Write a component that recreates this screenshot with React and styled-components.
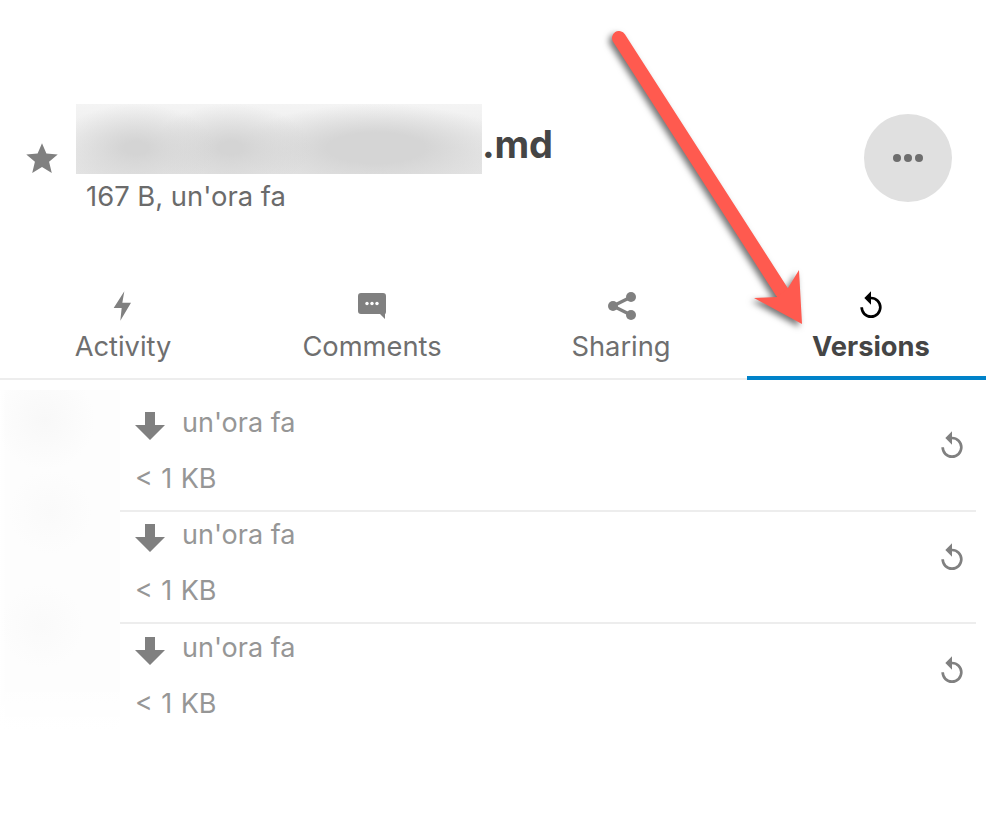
import React from "react";
import styled, { createGlobalStyle } from "styled-components";

const GlobalStyle = createGlobalStyle`
  html, body {
    margin: 0;
    padding: 0;
    background: #fff;
  }
  body {
    font-family: Inter, "Liberation Sans", sans-serif;
  }
`;

const Page = styled.div`
  position: relative;
  width: 986px;
  height: 814px;
  overflow: hidden;
  background: #fff;
`;

const Header = styled.header`
  display: flex;
  align-items: flex-start;
  height: 290px;
  padding: 104px 34px 0 25px;
  box-sizing: border-box;
`;

const StarIcon = styled.svg`
  width: 34px;
  height: 34px;
  margin-top: 37px;
  margin-right: 17px;
  fill: #808080;
  flex: none;
`;

const TitleBlock = styled.div`
  display: flex;
  flex-direction: column;
`;

const TitleRow = styled.div`
  display: flex;
  align-items: center;
  height: 70px;
`;

const BlurredName = styled.div`
  width: 406px;
  height: 70px;
  background:
    radial-gradient(ellipse 80px 44px at 60px 44px, #d4d4d4 15%, transparent 100%),
    radial-gradient(ellipse 80px 44px at 155px 44px, #d4d4d4 15%, transparent 100%),
    radial-gradient(ellipse 140px 44px at 300px 44px, #d5d5d5 35%, transparent 100%),
    linear-gradient(#f4f4f4, #e4e4e4);
`;

const Extension = styled.span`
  font-size: 38px;
  font-weight: 700;
  color: #454545;
  line-height: 1;
  margin: 10px 0 0 0;
  letter-spacing: -0.2px;
`;

const Meta = styled.div`
  margin: 7px 0 0 10px;
  font-size: 27.4px;
  line-height: 30px;
  color: #6b6b6b;
`;

const MenuButton = styled.div`
  display: flex;
  align-items: center;
  justify-content: center;
  gap: 3px;
  width: 88px;
  height: 88px;
  margin: 10px 0 0 auto;
  border-radius: 50%;
  background: #e0e0e0;
`;

const Dot = styled.span`
  width: 8px;
  height: 8px;
  border-radius: 50%;
  background: #6e6e6e;
`;

const Tabs = styled.nav`
  display: flex;
  margin-left: -1.5px;
  width: 996px;
  height: 90px;
  box-sizing: border-box;
  border-bottom: 2px solid #ededed;
`;

const Tab = styled.div`
  display: flex;
  flex-direction: column;
  align-items: center;
  width: ${(p) => (p.$active ? "248px" : "249px")};
  margin-left: ${(p) => (p.$active ? "1.5px" : "0")};
  height: 90px;
  flex: none;
  box-sizing: border-box;
  border-bottom: ${(p) => (p.$active ? "4px solid #0082c9" : "none")};
  color: ${(p) => (p.$active ? "#454545" : "#6f6f6f")};
  font-size: 27.3px;
  font-weight: ${(p) => (p.$active ? 700 : 400)};
`;

const TabIcon = styled.svg`
  width: 32px;
  height: 32px;
  fill: ${(p) => (p.$active ? "#000" : "#808080")};
`;

const TabLabel = styled.span`
  margin-top: 9px;
  line-height: 32px;
`;

const Body = styled.div`
  display: flex;
  height: 344px;
  padding-top: 10px;
`;

const BlurredAvatars = styled.div`
  width: 120px;
  height: 340px;
  flex: none;
  background:
    linear-gradient(transparent 85%, #fff 100%),
    linear-gradient(90deg, #fff 0, transparent 5%),
    radial-gradient(circle 50px at 45px 30px, #f8f8f8, transparent 100%),
    radial-gradient(circle 42px at 50px 122px, #fafafa, transparent 100%),
    radial-gradient(circle 42px at 42px 236px, #fafafa, transparent 100%),
    #fdfdfd;
`;

const VersionList = styled.ul`
  list-style: none;
  margin: 0 10px 0 0;
  padding: 10px 0 0;
  flex: 1;
`;

const VersionRow = styled.li`
  display: flex;
  align-items: center;
  justify-content: space-between;
  height: 112px;
  box-sizing: border-box;
  padding: 0 8px 0 15px;
  border-bottom: ${(p) => (p.$last ? "none" : "2px solid #ededed")};
`;

const VersionInfo = styled.div`
  display: flex;
  flex-direction: column;
  gap: 26px;
  color: #969696;
  font-size: 27px;
  line-height: 30px;
  margin-top: -8px;
`;

const DateLine = styled.div`
  display: flex;
  align-items: flex-start;
  gap: 17px;
  height: 30px;
`;

const SizeLine = styled.span`
  word-spacing: 0.8px;
`;

const DownloadIcon = styled.svg`
  width: 30px;
  height: 30px;
  margin-top: 3px;
  fill: #808080;
`;

const RestoreIcon = styled.svg`
  width: 32px;
  height: 32px;
  fill: #808080;
  margin-top: -18px;
`;

const ArrowOverlay = styled.svg`
  position: absolute;
  left: 600px;
  top: 20px;
  width: 220px;
  height: 320px;
  filter: drop-shadow(-3px 3px 3px rgba(0, 0, 0, 0.55));
`;

const undoPath =
  "M12 5V1L7 6l5 5V7a6 6 0 1 1-6 6H4a8 8 0 1 0 8-8z";

const versions = ["a", "b", "c"];

export default function App() {
  return (
    <Page>
      <GlobalStyle />
      <Header>
        <StarIcon viewBox="0 0 24 24">
          <path d="M12 1.5l3.1 7.4 8 .6-6.1 5.2 1.9 7.8L12 18.3l-6.9 4.2 1.9-7.8L.9 9.5l8-.6z" />
        </StarIcon>
        <TitleBlock>
          <TitleRow>
            <BlurredName />
            <Extension>.md</Extension>
          </TitleRow>
          <Meta>167 B, un'ora fa</Meta>
        </TitleBlock>
        <MenuButton>
          <Dot />
          <Dot />
          <Dot />
        </MenuButton>
      </Header>

      <Tabs>
        <Tab>
          <TabIcon viewBox="0 0 24 24">
            <path d="M13 1L5 13.5h6L10 23l8-13.5h-6.5z" />
          </TabIcon>
          <TabLabel>Activity</TabLabel>
        </Tab>
        <Tab>
          <TabIcon viewBox="0 0 32 32">
            <path d="M5 3h22a3 3 0 0 1 3 3v16a3 3 0 0 1-1 2.2V29l-5-5H5a3 3 0 0 1-3-3V6a3 3 0 0 1 3-3z" />
            <circle cx="11" cy="13.5" r="1.7" fill="#fff" />
            <circle cx="16" cy="13.5" r="1.7" fill="#fff" />
            <circle cx="21" cy="13.5" r="1.7" fill="#fff" />
          </TabIcon>
          <TabLabel>Comments</TabLabel>
        </Tab>
        <Tab>
          <TabIcon viewBox="0 0 32 32">
            <circle cx="26" cy="7" r="5" />
            <circle cx="26" cy="25" r="5" />
            <circle cx="8" cy="16" r="5" />
            <path d="M8 16L26 7M8 16l18 9" stroke="#808080" strokeWidth="3.4" />
          </TabIcon>
          <TabLabel>Sharing</TabLabel>
        </Tab>
        <Tab $active>
          <TabIcon $active viewBox="0 0 24 24">
            <path d={undoPath} />
          </TabIcon>
          <TabLabel>Versions</TabLabel>
        </Tab>
      </Tabs>

      <Body>
        <BlurredAvatars />
        <VersionList>
          {versions.map((id, i) => (
            <VersionRow key={id} $last={i === versions.length - 1}>
              <VersionInfo>
                <DateLine>
                  <DownloadIcon viewBox="0 0 30 30">
                    <path d="M10 1h10v13h10L15 29 0 14h10z" />
                  </DownloadIcon>
                  <span>un'ora fa</span>
                </DateLine>
                <SizeLine>&lt; 1 KB</SizeLine>
              </VersionInfo>
              <RestoreIcon viewBox="0 0 24 24">
                <path d={undoPath} />
              </RestoreIcon>
            </VersionRow>
          ))}
        </VersionList>
      </Body>

      <ArrowOverlay viewBox="600 20 220 320">
        <path d="M619 38L782 292" stroke="#ff5a4f" strokeWidth="14" strokeLinecap="round" fill="none" />
        <path d="M802 324L799 270 788 288 777 297 754 298z" fill="#ff5a4f" />
      </ArrowOverlay>
    </Page>
  );
}
